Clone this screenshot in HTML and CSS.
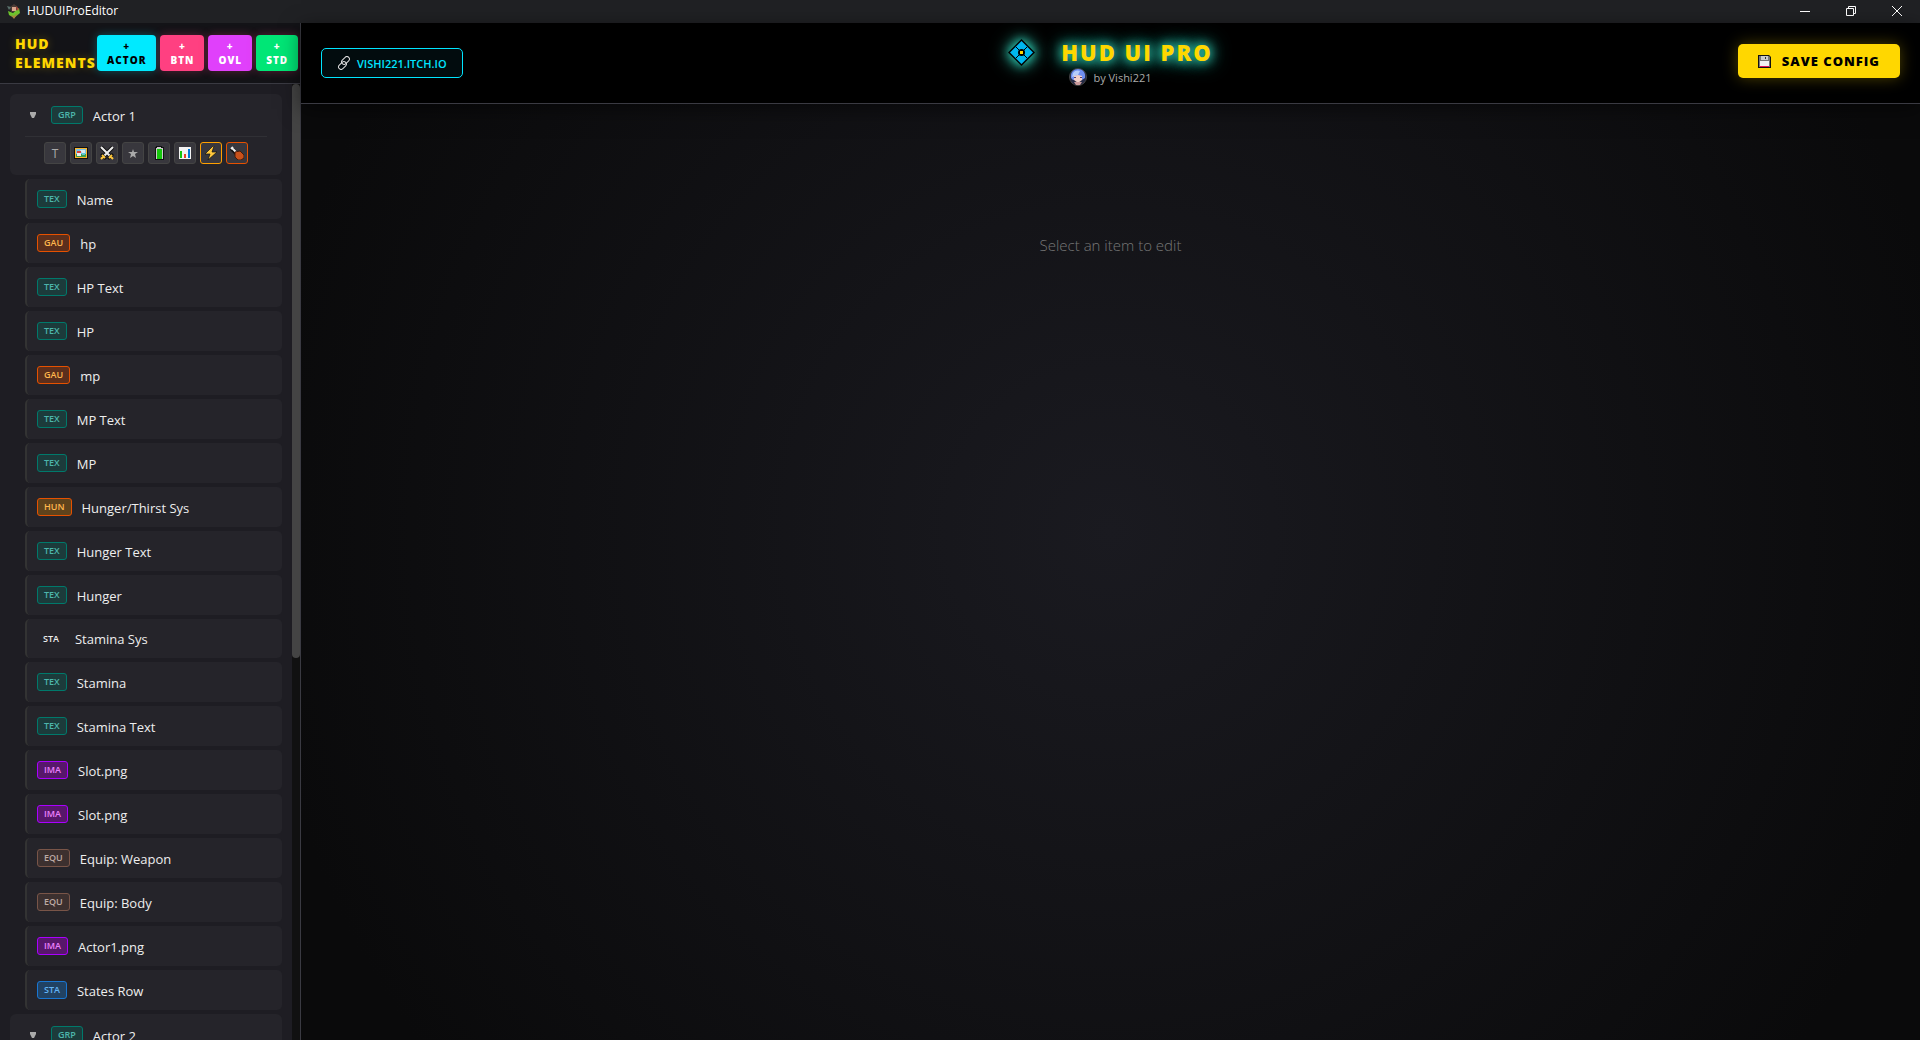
FILE: index.html
```html
<!DOCTYPE html>
<html lang="en">
<head>
    <meta charset="UTF-8">
    <meta name="viewport" content="width=device-width, initial-scale=1.0">
    <title>HUDUIProEditor</title>
    <link rel="stylesheet" href="styles.css">
</head>
<body>
    <!-- Window title bar -->
    <div class="titlebar">
        <svg class="app-icon" viewBox="0 0 14 16">
            <path d="M3 4l4-3 4 3-1 5H4z" fill="#4a3b35"/>
            <path d="M5 4h4v4H5z" fill="#d9a58c"/>
            <path d="M0 3l4 1-2 3z" fill="#59706b"/>
            <path d="M1 8l5 2 6-5 1 5-6 5-5-3z" fill="#6cc52c"/>
            <path d="M4 12l3 1 4-3-4 6z" fill="#a8823f"/>
            <path d="M9 3l3 3-2 2z" fill="#b5443a"/>
        </svg>
        <span class="app-name">HUDUIProEditor</span>
        <div class="window-controls">
            <button type="button" aria-label="Minimize">
                <svg viewBox="0 0 10 10"><path d="M0 5.5h10"/></svg>
            </button>
            <button type="button" aria-label="Restore">
                <svg viewBox="0 0 10 10"><path d="M.5 2.5h7v7h-7zM2.5 2.5v-2h7v7h-2"/></svg>
            </button>
            <button type="button" aria-label="Close">
                <svg viewBox="0 0 10 10"><path d="M0 0l10 10M10 0L0 10"/></svg>
            </button>
        </div>
    </div>

    <div class="app">
        <aside class="sidebar">
            <div class="sidebar-header">
                <h2>HUD ELEMENTS</h2>
                <div class="add-buttons">
                    <button type="button" class="add-btn actor">+<br>ACTOR</button>
                    <button type="button" class="add-btn btn">+<br>BTN</button>
                    <button type="button" class="add-btn ovl">+<br>OVL</button>
                    <button type="button" class="add-btn std">+<br>STD</button>
                </div>
            </div>

            <div class="list-wrap">
                <div class="list">
                    <div class="group">
                        <button type="button" class="group-row">
                            <svg class="arrow" viewBox="0 0 6 6"><path d="M0 0h6v2L4 6H2L0 2z"/></svg>
                            <span class="badge tex">GRP</span>
                            <span class="label">Actor 1</span>
                        </button>
                        <div class="tools">
                            <button type="button" class="tool">T</button>
                            <button type="button" class="tool" aria-label="Add image">
                                <svg viewBox="0 0 14 14">
                                    <path d="M0 1h14v12H0z" fill="#111"/>
                                    <path d="M1 2h12v10H1z" fill="#fdb62b"/>
                                    <path d="M2 3h10v8H2z" fill="#79c2e8"/>
                                    <path d="M6 4h5v3H8z" fill="#d6e8ee"/>
                                    <path d="M2 8h10v3H2z" fill="#3e9c4c"/>
                                    <path d="M3 5h4v2H3z" fill="#d8433a"/>
                                    <path d="M3 7h4v3H3z" fill="#eee"/>
                                    <path d="M8 7h3v2H8z" fill="#5ec6d6"/>
                                </svg>
                            </button>
                            <button type="button" class="tool" aria-label="Add weapon">
                                <svg viewBox="0 0 14 14">
                                    <path d="M1 1l9 9M13 1l-9 9" stroke="#111" stroke-width="4"/>
                                    <path d="M1 1l9 9M13 1l-9 9" stroke="#eee" stroke-width="2"/>
                                    <path d="M1 8l5 5M13 8l-5 5" stroke="#111" stroke-width="3"/>
                                    <path d="M2 9l3 3M12 9l-3 3M1 13l2-2M13 13l-2-2" stroke="#ffc83d" stroke-width="2"/>
                                </svg>
                            </button>
                            <button type="button" class="tool" aria-label="Add icon">
                                <svg viewBox="0 0 14 14"><path d="M7 3l1 3h4L9 8l1 4-3-2-3 2 1-4-3-2h4z" fill="#aaa"/></svg>
                            </button>
                            <button type="button" class="tool" aria-label="Add gauge">
                                <svg viewBox="0 0 14 14">
                                    <path d="M4 0h6v1h2v13H3V1h1z" fill="#111"/>
                                    <path d="M5 1h4v1h2v11H4V2h1z" fill="#ccc"/>
                                    <path d="M5 3h5v10H5z" fill="#16c60c"/>
                                </svg>
                            </button>
                            <button type="button" class="tool" aria-label="Add chart">
                                <svg viewBox="0 0 14 14">
                                    <path d="M1 1h12v12H1z" fill="#f2f2f2"/>
                                    <path d="M2 5h2v7H2z" fill="#16c60c"/>
                                    <path d="M6 8h2v4H6z" fill="#e8412a"/>
                                    <path d="M10 3h2v9h-2z" fill="#0078d7"/>
                                </svg>
                            </button>
                            <button type="button" class="tool stamina" aria-label="Add stamina">
                                <svg viewBox="0 0 14 14"><path d="M9 0L1 8h5l-2 6 9-8H8l2-6z" fill="#ffc83d" stroke="#111" stroke-width=".7"/></svg>
                            </button>
                            <button type="button" class="tool hunger" aria-label="Add hunger">
                                <svg viewBox="0 0 14 14">
                                    <path d="M1 2l6 6" stroke="#111" stroke-width="4"/>
                                    <path d="M1 3l2-2M2 2l5 5" stroke="#eee" stroke-width="2"/>
                                    <path d="M5 6l5-1 4 4v3l-3 2H8l-3-3z" fill="#c8511b" stroke="#4a1a08"/>
                                </svg>
                            </button>
                        </div>
                    </div>

                    <button type="button" class="item"><span class="badge tex">TEX</span><span class="label">Name</span></button>
                    <button type="button" class="item"><span class="badge gau">GAU</span><span class="label">hp</span></button>
                    <button type="button" class="item"><span class="badge tex">TEX</span><span class="label">HP Text</span></button>
                    <button type="button" class="item"><span class="badge tex">TEX</span><span class="label">HP</span></button>
                    <button type="button" class="item"><span class="badge gau">GAU</span><span class="label">mp</span></button>
                    <button type="button" class="item"><span class="badge tex">TEX</span><span class="label">MP Text</span></button>
                    <button type="button" class="item"><span class="badge tex">TEX</span><span class="label">MP</span></button>
                    <button type="button" class="item"><span class="badge hun">HUN</span><span class="label">Hunger/Thirst Sys</span></button>
                    <button type="button" class="item"><span class="badge tex">TEX</span><span class="label">Hunger Text</span></button>
                    <button type="button" class="item"><span class="badge tex">TEX</span><span class="label">Hunger</span></button>
                    <button type="button" class="item plain"><span class="badge">STA</span><span class="label">Stamina Sys</span></button>
                    <button type="button" class="item"><span class="badge tex">TEX</span><span class="label">Stamina</span></button>
                    <button type="button" class="item"><span class="badge tex">TEX</span><span class="label">Stamina Text</span></button>
                    <button type="button" class="item"><span class="badge ima">IMA</span><span class="label">Slot.png</span></button>
                    <button type="button" class="item"><span class="badge ima">IMA</span><span class="label">Slot.png</span></button>
                    <button type="button" class="item"><span class="badge equ">EQU</span><span class="label">Equip: Weapon</span></button>
                    <button type="button" class="item"><span class="badge equ">EQU</span><span class="label">Equip: Body</span></button>
                    <button type="button" class="item"><span class="badge ima">IMA</span><span class="label">Actor1.png</span></button>
                    <button type="button" class="item"><span class="badge sta">STA</span><span class="label">States Row</span></button>

                    <div class="group">
                        <button type="button" class="group-row">
                            <svg class="arrow" viewBox="0 0 6 6"><path d="M0 0h6v2L4 6H2L0 2z"/></svg>
                            <span class="badge tex">GRP</span>
                            <span class="label">Actor 2</span>
                        </button>
                    </div>
                </div>
                <div class="scrollbar"><div class="thumb"></div></div>
            </div>
        </aside>

        <main class="main">
            <header class="main-header">
                <a class="itch-link" href="#">
                    <svg viewBox="0 0 14 14" fill="none">
                        <rect x="4" y="2" width="9" height="5" rx="2.5" transform="rotate(-45 8.5 4.5)" stroke="#ddd"/>
                        <rect x="1" y="7" width="9" height="5" rx="2.5" transform="rotate(-45 5.5 9.5)" stroke="#ddd"/>
                    </svg>
                    VISHI221.ITCH.IO
                </a>
                <div class="brand">
                    <div class="brand-title">
                        <svg class="diamond" viewBox="0 0 27 27">
                            <path d="M13.5 0L27 13.5 13.5 27 0 13.5z" fill="#000"/>
                            <path d="M13.5 2L25 13.5 13.5 25 2 13.5z" fill="#00b7f0"/>
                            <path d="M8 8l11 11M19 8L8 19" stroke="#000" stroke-width="1"/>
                            <circle cx="13.5" cy="13.5" r="3.5" fill="#000"/>
                            <path d="M12 12h3v3h-3z" fill="#ffd700"/>
                        </svg>
                        <h1>HUD UI PRO</h1>
                    </div>
                    <div class="byline">
                        <svg class="avatar" viewBox="0 0 18 18">
                            <circle cx="9" cy="9" r="8.5" fill="#252a46" stroke="#444"/>
                            <path d="M2 10C1 4 5 1 9 1s8 3 7 9l-3 2H4z" fill="#6f8ff0"/>
                            <path d="M4 5c2-3 5-3 7-2L9 7 3 9z" fill="#b5cdfb"/>
                            <path d="M5 8l4-1 4 1v4l-4 3-4-3z" fill="#f1cfc8"/>
                            <path d="M5 9h2v1H5zM11 9h2v1h-2z" fill="#4b3b72"/>
                            <path d="M5 14h8l-2 3H7z" fill="#c99a9a"/>
                        </svg>
                        <span>by Vishi221</span>
                    </div>
                </div>
                <button type="button" class="save-btn">
                    <svg viewBox="0 0 13 13">
                        <path d="M0 0h11l2 2v11H0z" fill="#111"/>
                        <path d="M1 1h10l1 1v10H1z" fill="#777"/>
                        <path d="M3 1h7v4H3z" fill="#ccc"/>
                        <path d="M7 2h1v2H7z" fill="#333"/>
                        <path d="M2 6h9v5H2z" fill="#f2f2f2"/>
                        <path d="M2 11h9v1H2z" fill="#e3155b"/>
                    </svg>
                    SAVE CONFIG
                </button>
            </header>
            <div class="editor">
                <p>Select an item to edit</p>
            </div>
        </main>
    </div>
</body>
</html>
```

FILE: styles.css
```css
* {
    margin: 0;
    padding: 0;
    box-sizing: border-box;
}

body {
    font-family: "Open Sans", "Noto Sans", sans-serif;
    background-color: #050505;
    color: #eee;
    height: 100vh;
    display: flex;
    flex-direction: column;
    overflow: hidden;
}

button {
    font-family: inherit;
    color: inherit;
    background: none;
    border: none;
    cursor: pointer;
}

/* Title bar */
.titlebar {
    display: flex;
    align-items: center;
    height: 23px;
    padding: 0 0 2px 7px;
    background-color: #202124;
    flex-shrink: 0;
}

.app-icon {
    width: 14px;
    height: 16px;
    margin-right: 6px;
}

.app-name {
    font-size: 12px;
    line-height: 20px;
    color: #fff;
}

.window-controls {
    display: flex;
    height: 100%;
    margin-left: auto;
}

.window-controls button {
    display: flex;
    align-items: center;
    justify-content: center;
    width: 46px;
}

.window-controls svg {
    width: 10px;
    height: 10px;
    fill: none;
    stroke: #fff;
}

.app {
    display: flex;
    flex: 1;
    min-height: 0;
}

/* Sidebar */
.sidebar {
    display: flex;
    flex-direction: column;
    width: 301px;
    flex-shrink: 0;
    background-color: #1e1d23;
    border-right: 1px solid #3a3a42;
}

.sidebar-header {
    display: flex;
    align-items: center;
    height: 61px;
    padding-left: 15px;
    background-color: #131317;
    border-bottom: 1px solid #3a3a42;
    overflow: hidden;
    flex-shrink: 0;
}

.sidebar-header h2 {
    width: 82px;
    flex-shrink: 0;
    font-size: 14px;
    font-weight: 800;
    line-height: 19px;
    letter-spacing: 1px;
    color: #ffd700;
    text-shadow: 0 0 10px rgba(255, 215, 0, 0.3);
}

.add-buttons {
    display: flex;
    gap: 4px;
}

.add-btn {
    height: 36px;
    padding: 0 10px;
    border-radius: 4px;
    font-size: 10px;
    font-weight: 800;
    line-height: 14px;
    letter-spacing: 1px;
    color: #fff;
}

.add-btn.actor {
    background-color: #00eaff;
    color: #000;
    box-shadow: 0 0 10px rgba(0, 234, 255, 0.3);
}

.add-btn.btn {
    background-color: #ff4081;
    box-shadow: 0 0 10px rgba(255, 64, 129, 0.3);
}

.add-btn.ovl {
    background-color: #e040fb;
    box-shadow: 0 0 10px rgba(255, 64, 129, 0.3);
}

.add-btn.std {
    background-color: #00e676;
    box-shadow: 0 0 10px rgba(255, 64, 129, 0.3);
}

.list-wrap {
    display: flex;
    flex: 1;
    min-height: 0;
}

.list {
    flex: 1;
    padding: 10px;
    overflow: hidden;
}

.scrollbar {
    width: 8px;
    background-color: #111;
}

.thumb {
    height: 60%;
    background-color: #444;
    border-radius: 4px;
}

.group {
    padding: 0 15px;
    margin-bottom: 4px;
    background-color: #25242a;
    border-radius: 6px;
}

.group-row {
    display: flex;
    align-items: center;
    width: 100%;
    height: 42px;
}

.arrow {
    width: 6px;
    height: 6px;
    margin: 0 15px 0 5px;
    fill: #aaa;
}

.label {
    padding-top: 1px;
    font-size: 13px;
    line-height: 20px;
    color: #eee;
}

.badge {
    margin-right: 10px;
    padding: 0 6px;
    border: 1px solid transparent;
    border-radius: 3px;
    font-size: 9px;
    font-weight: 600;
    line-height: 16px;
}

.badge.tex {
    background-color: #1c3b3b;
    border-color: #00796b;
    color: #4db6ac;
}

.badge.gau {
    background-color: #5c2f1c;
    border-color: #e65100;
    color: #ffb74d;
}

.badge.hun {
    background-color: #5f431c;
    border-color: #e65100;
    color: #ffb74d;
}

.badge.ima {
    background-color: #57176b;
    border-color: #aa00ff;
    color: #ea80fc;
}

.badge.equ {
    background-color: #3c302f;
    border-color: #795548;
    color: #bcaaa4;
}

.badge.sta {
    background-color: #214263;
    border-color: #1976d2;
    color: #64b5f6;
}

.tools {
    display: flex;
    gap: 4px;
    padding: 5px 0 11px 19px;
    border-top: 1px solid #303035;
}

.tool {
    display: flex;
    align-items: center;
    justify-content: center;
    width: 22px;
    height: 22px;
    background-color: #38373d;
    border: 1px solid #444;
    border-radius: 3px;
    font-size: 12px;
    color: #aaa;
}

.tool svg {
    width: 14px;
    height: 14px;
    flex-shrink: 0;
}

.tool.stamina {
    border-color: #ffa000;
}

.tool.hunger {
    border-color: #e65100;
}

.item {
    display: flex;
    align-items: center;
    width: calc(100% - 15px);
    height: 40px;
    margin: 0 0 4px 15px;
    padding-left: 10px;
    background-color: #25242a;
    border-left: 2px solid #333;
    border-radius: 5px;
}

.item.plain {
    height: 39px;
}

.item.plain .badge {
    padding: 0 5px;
}

/* Main area */
.main {
    display: flex;
    flex-direction: column;
    flex: 1;
    background: radial-gradient(circle, #1a1a20 0%, #0a0a0b 90%);
}

.main-header {
    display: grid;
    grid-template-columns: 1fr auto 1fr;
    align-items: center;
    height: 81px;
    padding: 0 20px;
    background-color: #000;
    border-bottom: 1px solid #3a3a42;
    box-shadow: 0 5px 20px rgba(0, 0, 0, 0.5);
}

.itch-link {
    display: flex;
    align-items: center;
    gap: 6px;
    justify-self: start;
    height: 30px;
    padding: 0 15px;
    background-color: #020c0e;
    border: 1px solid #00e5ff;
    border-radius: 5px;
    font-size: 11px;
    font-weight: 600;
    color: #00e5ff;
    text-decoration: none;
}

.itch-link svg {
    width: 14px;
    height: 14px;
}

.brand {
    padding-bottom: 2px;
}

.brand-title {
    display: flex;
    align-items: center;
    justify-content: center;
    gap: 26px;
    height: 30px;
}

.diamond {
    width: 27px;
    height: 27px;
    filter: drop-shadow(0 0 5px #2bc4ac) drop-shadow(0 0 8px #2bc4ac);
}

.brand-title h1 {
    font-size: 22px;
    font-weight: 800;
    line-height: 30px;
    letter-spacing: 2px;
    color: #ffd700;
    text-shadow: 0 0 10px #2bc4ac, 0 0 15px #2bc4ac, 0 0 20px #2bc4ac;
}

.byline {
    display: flex;
    align-items: center;
    justify-content: center;
    gap: 6px;
    height: 20px;
    font-size: 11px;
    color: #aaa;
}

.avatar {
    width: 18px;
    height: 18px;
}

.save-btn {
    display: flex;
    align-items: center;
    gap: 11px;
    justify-self: end;
    height: 34px;
    margin-bottom: 4px;
    padding: 0 20px;
    background-color: #ffd700;
    border-radius: 5px;
    font-size: 13px;
    font-weight: 800;
    letter-spacing: 1px;
    color: #000;
    box-shadow: 0 0 15px rgba(255, 215, 0, 0.3);
}

.save-btn svg {
    width: 13px;
    height: 13px;
}

.editor {
    flex: 1;
    padding-top: 129px;
    text-align: center;
}

.editor p {
    font-size: 15px;
    font-weight: 300;
    line-height: 24px;
    color: #777;
}
```
